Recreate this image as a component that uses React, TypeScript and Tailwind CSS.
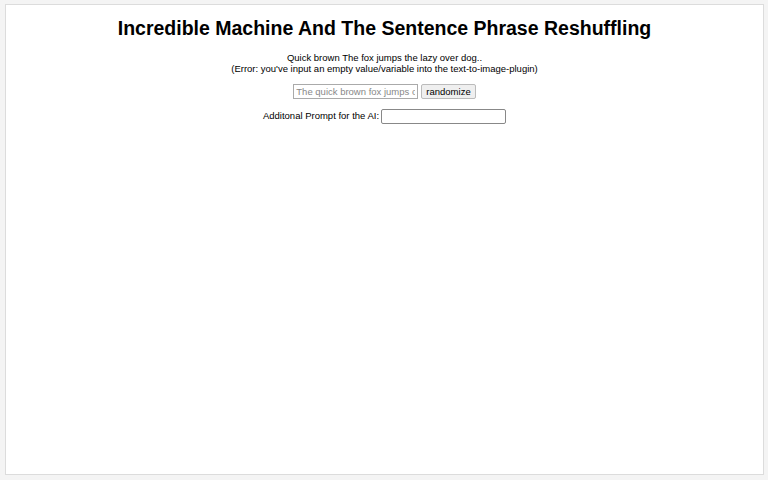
export default function App() {
  return (
    <div className="w-[768px] h-[480px] bg-[#f4f4f4] pt-[4px] pl-[5px]" style={{ fontFamily: '"Liberation Sans", Arial, sans-serif' }}>
      <div className="w-[759px] h-[471px] bg-white border border-[#dcdcdc] flex flex-col items-center text-black">
        <h1 className="text-[19.5px] font-bold leading-[24px] mt-[11px]">Incredible Machine And The Sentence Phrase Reshuffling</h1>
        <div className="text-[9.5px] leading-[11px] text-center mt-[12px]">
          <div>Quick brown The fox jumps the lazy over dog..</div>
          <div>(Error: you've input an empty value/variable into the text-to-image-plugin)</div>
        </div>
        <div className="flex items-center gap-[3px] mt-[10px] text-[9.5px]">
          <input
            className="w-[125px] h-[15px] border border-[#aaa] px-[2px] text-[9.5px] text-[#777] placeholder-[#888] outline-none"
            placeholder="The quick brown fox jumps over the lazy dog"
          />
          <button className="h-[15px] px-[4px] border border-[#bbb] bg-[#efefef] rounded-[2px] text-[9.5px] leading-[12px]">randomize</button>
        </div>
        <div className="flex items-center gap-[2px] mt-[10px] text-[9.5px]">
          <span>Additonal Prompt for the AI:</span>
          <input className="w-[125px] h-[15px] border border-[#888] rounded-[2px] outline-none" />
        </div>
      </div>
    </div>
  );
}
